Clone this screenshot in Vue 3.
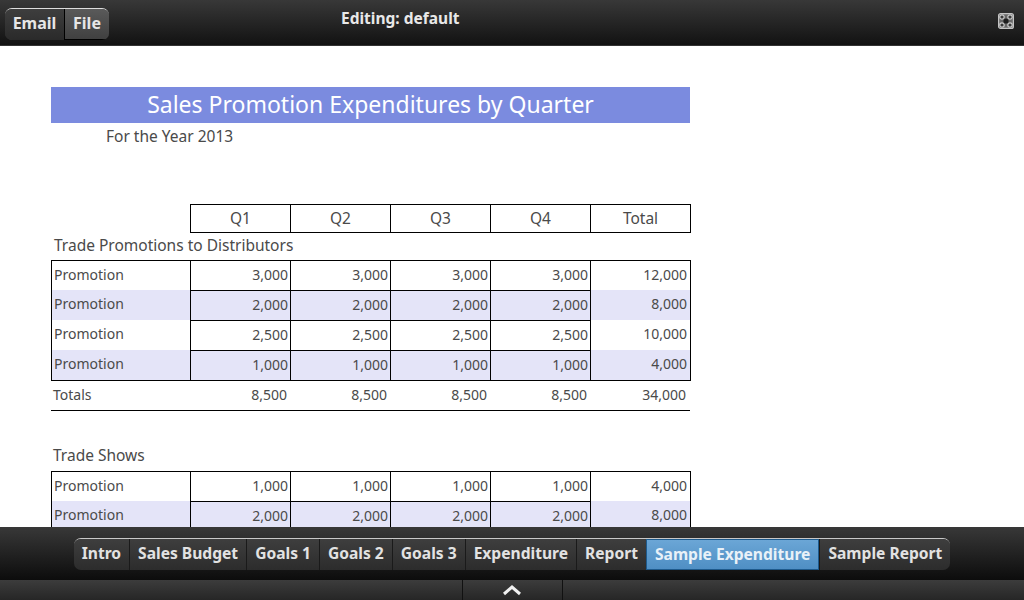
<script setup>
const quarters = ['Q1', 'Q2', 'Q3', 'Q4', 'Total']
const tabs = ['Intro', 'Sales Budget', 'Goals 1', 'Goals 2', 'Goals 3', 'Expenditure', 'Report', 'Sample Expenditure', 'Sample Report']
const activeTab = 'Sample Expenditure'

const sections = [
  {
    title: 'Trade Promotions to Distributors',
    rows: [
      ['3,000', '3,000', '3,000', '3,000', '12,000'],
      ['2,000', '2,000', '2,000', '2,000', '8,000'],
      ['2,500', '2,500', '2,500', '2,500', '10,000'],
      ['1,000', '1,000', '1,000', '1,000', '4,000']
    ],
    totals: ['8,500', '8,500', '8,500', '8,500', '34,000']
  },
  {
    title: 'Trade Shows',
    rows: [
      ['1,000', '1,000', '1,000', '1,000', '4,000'],
      ['2,000', '2,000', '2,000', '2,000', '8,000']
    ]
  }
]
</script>

<template>
  <div class="screen">
    <header class="topbar">
      <div class="btn-group">
        <button class="top-btn">Email</button>
        <button class="top-btn top-btn-on">File</button>
      </div>
      <div class="editing">Editing: default</div>
      <svg class="expand-icon" width="16" height="16" viewBox="0 0 16 16">
        <rect x="0.6" y="0.6" width="14.8" height="14.8" rx="2" fill="#6a6a6a" stroke="#c4c4c4" stroke-width="1.2" />
        <g fill="#3a3a3a" stroke="#c8c8c8" stroke-width="1.2">
          <circle cx="4" cy="4" r="2.2" />
          <circle cx="12" cy="4" r="2.2" />
          <circle cx="4" cy="12" r="2.2" />
          <circle cx="12" cy="12" r="2.2" />
        </g>
        <circle cx="8" cy="8" r="2.6" fill="#1e1e1e" />
      </svg>
    </header>

    <main class="content">
      <div class="sheet">
        <h1 class="title">Sales Promotion Expenditures by Quarter</h1>
        <div class="subtitle">For the Year 2013</div>

        <div class="head-row">
          <div v-for="q in quarters" :key="q" class="head-cell">{{ q }}</div>
        </div>

        <section v-for="sec in sections" :key="sec.title" class="section">
          <div class="section-title">{{ sec.title }}</div>
          <div class="grid">
            <div v-for="(row, i) in sec.rows" :key="i" class="row" :class="{ shaded: i % 2 === 1 }">
              <div class="label">Promotion</div>
              <div v-for="(val, j) in row" :key="j" class="num" :class="{ 'num-total': j === 4 }">{{ val }}</div>
            </div>
          </div>
          <div v-if="sec.totals" class="totals">
            <div class="label">Totals</div>
            <div v-for="(val, j) in sec.totals" :key="j" class="num">{{ val }}</div>
          </div>
        </section>
      </div>
    </main>

    <nav class="tabbar">
      <div class="tabs">
        <div v-for="t in tabs" :key="t" class="tab" :class="{ active: t === activeTab }">{{ t }}</div>
      </div>
    </nav>

    <footer class="bottombar">
      <div class="handle">
        <svg width="20" height="12" viewBox="0 0 20 12" fill="none" stroke="#f0f0f0" stroke-width="3">
          <path d="M2 10 L10 3 L18 10" />
        </svg>
      </div>
    </footer>
  </div>
</template>

<style>
html, body {
  margin: 0;
  background: #fff;
}
</style>

<style scoped>
.screen {
  width: 1024px;
  height: 600px;
  display: flex;
  flex-direction: column;
  overflow: hidden;
  font-family: "Noto Sans", "Open Sans", sans-serif;
  background: #fff;
}

/* top bar */
.topbar {
  height: 46px;
  flex: none;
  position: relative;
  display: flex;
  align-items: flex-start;
  box-sizing: border-box;
  padding: 8px 10px 0 5px;
  background: linear-gradient(#383838, #121212);
  border-bottom: 1px solid #333;
}
.btn-group {
  display: flex;
  height: 32px;
  box-sizing: border-box;
  border-radius: 7px;
  border-top: 1px solid #ddd;
  overflow: hidden;
  background: #333;
}
.top-btn {
  border: 0;
  padding: 0 0 3px;
  font-family: inherit;
  font-size: 16px;
  font-weight: 700;
  color: #e6e6e6;
  background: linear-gradient(#3e3e3e, #2a2a2a);
}
.top-btn:first-child {
  width: 59px;
}
.top-btn-on {
  width: 45px;
  padding-bottom: 2px;
  background: linear-gradient(#5a5a5a, #404040);
  border-left: 1px solid #000;
  border-bottom: 1px solid #000;
}
.editing {
  position: absolute;
  left: 341px;
  top: 8px;
  font-size: 15.5px;
  font-weight: 700;
  color: #e8e8e8;
  line-height: 20px;
}
.expand-icon {
  margin-left: auto;
  margin-top: 5px;
}

/* sheet */
.content {
  flex: 1;
  min-height: 0;
  overflow: hidden;
  background: #fff;
  padding: 41px 0 0 51px;
}
.sheet {
  width: 640px;
  color: #4a4a4a;
  font-size: 14px;
}
.title {
  margin: 0;
  height: 36px;
  line-height: 35px;
  background: #7b8bdf;
  color: #fff;
  font-size: 23px;
  font-weight: 400;
  text-align: center;
  width: 639px;
}
.subtitle {
  margin: 3px 0 0 55px;
  height: 20px;
  line-height: 20px;
  font-size: 15.5px;
}
.head-row {
  margin: 58px 0 0 139px;
  display: flex;
  height: 29px;
  box-sizing: border-box;
  border: 1px solid #000;
  width: 501px;
}
.head-cell {
  width: 100px;
  border-left: 1px solid #000;
  box-sizing: border-box;
  text-align: center;
  line-height: 27px;
  font-size: 15.5px;
}
.head-cell:first-child {
  border-left: 0;
  width: 99px;
}
.section-title {
  height: 27px;
  line-height: 25px;
  padding-left: 3px;
  font-size: 15.5px;
}
.section + .section .section-title {
  margin-top: 33px;
  padding-left: 2px;
  line-height: 22px;
}
.grid {
  border: 1px solid #000;
  width: 640px;
  box-sizing: border-box;
}
.row {
  display: grid;
  grid-template-columns: 138px 100px 100px 100px 100px 99px;
  height: 30px;
}
.row:first-child {
  height: 29px;
}
.label {
  padding-left: 2px;
  line-height: 28px;
}
.num {
  box-sizing: border-box;
  border-left: 1px solid #000;
  border-top: 1px solid #000;
  text-align: right;
  padding-right: 2px;
  line-height: 28px;
}
.num-total {
  border-top: 0;
}
.row:first-child .num {
  border-top: 0;
}
.shaded {
  background: #e4e4f8;
}
.totals {
  display: grid;
  grid-template-columns: 139px 100px 100px 100px 100px 99px;
  height: 30px;
  box-sizing: border-box;
  border-bottom: 1px solid #000;
  width: 639px;
}
.totals .num {
  border: 0;
  padding-right: 3px;
}
.totals .label {
  line-height: 28px;
}

/* tabs */
.tabbar {
  height: 53px;
  flex: none;
  box-sizing: border-box;
  display: flex;
  justify-content: center;
  padding-top: 11px;
  background: linear-gradient(#383838, #0c0c0c);
}
.tabs {
  display: flex;
  height: 32px;
  box-sizing: border-box;
  border-top: 1px solid #c8c8c8;
  border-radius: 7px;
  overflow: hidden;
}
.tab {
  box-sizing: border-box;
  padding: 0 8px;
  font-size: 15.6px;
  font-weight: 700;
  line-height: 29px;
  color: #e2e2e2;
  background: linear-gradient(#3e3e3e, #2c2c2c);
  border-left: 1px solid #1a1a1a;
  white-space: nowrap;
}
.tab:first-child {
  border-left: 0;
}
.tab.active {
  color: #e8f1f8;
  background: linear-gradient(#6ba6d6, #4f8fc4);
  border: 1px solid #1e5a8c;
}

/* bottom bar */
.bottombar {
  height: 20px;
  flex: none;
  background: linear-gradient(#3c3c3c, #262626);
  display: flex;
  justify-content: center;
}
.handle {
  width: 101px;
  height: 100%;
  box-sizing: border-box;
  border-left: 1px solid #111;
  border-right: 1px solid #111;
  display: flex;
  align-items: center;
  justify-content: center;
}
</style>
